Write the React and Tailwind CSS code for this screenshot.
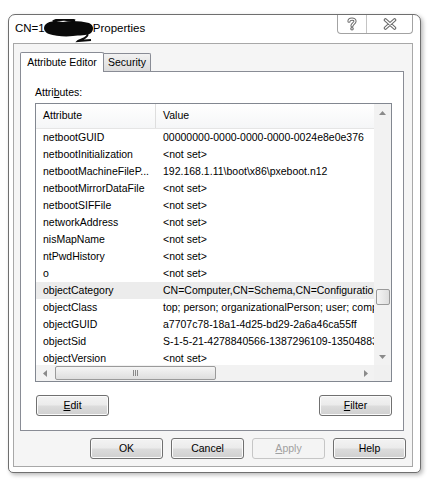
import React from "react";

const rows = [
  ["netbootGUID", "00000000-0000-0000-0000-0024e8e0e376"],
  ["netbootInitialization", "<not set>"],
  ["netbootMachineFileP...", "192.168.1.11\\boot\\x86\\pxeboot.n12"],
  ["netbootMirrorDataFile", "<not set>"],
  ["netbootSIFFile", "<not set>"],
  ["networkAddress", "<not set>"],
  ["nisMapName", "<not set>"],
  ["ntPwdHistory", "<not set>"],
  ["o", "<not set>"],
  ["objectCategory", "CN=Computer,CN=Schema,CN=Configuration,DC=corp,DC=local", true],
  ["objectClass", "top; person; organizationalPerson; user; computer"],
  ["objectGUID", "a7707c78-18a1-4d25-bd29-2a6a46ca55ff"],
  ["objectSid", "S-1-5-21-4278840566-1387296109-1350488331-1105"],
  ["objectVersion", "<not set>"],
];

function Btn({ children, disabled }) {
  return (
    <div
      className={`flex h-[21px] w-[73px] items-center justify-center rounded-[3px] border text-[10.5px] ${
        disabled
          ? "border-[#c6c6c6] bg-[#f4f4f4] text-[#a0a0a0]"
          : "border-[#707070] bg-[linear-gradient(#f3f3f3_0%,#ebebeb_48%,#dcdcdc_52%,#d0d0d0_100%)] text-black shadow-[inset_0_0_0_1px_#fbfbfb]"
      }`}
    >
      {children}
    </div>
  );
}

function Arrow({ dir }) {
  const pts = {
    up: "0,4 3.5,0 7,4",
    down: "0,0 3.5,4 7,0",
    left: "4,0 0,3.5 4,7",
    right: "0,0 4,3.5 0,7",
  }[dir];
  const vert = dir === "up" || dir === "down";
  return (
    <svg width={vert ? 7 : 4} height={vert ? 4 : 7}>
      <polygon points={pts} fill="#8a8a8a" />
    </svg>
  );
}

function Redaction() {
  return (
    <svg width="52" height="24" viewBox="0 0 52 24" className="-mx-[2px] mt-[4px]">
      <path
        d="M2 6 C6 1 14 2 20 3 C28 1 38 2 46 4 C51 6 51 11 48 14 C44 17 36 16 30 17 C22 18 12 17 6 15 C1 13 0 9 2 6 Z"
        fill="#0a0a0a"
      />
      <path d="M10 3 C16 -1 26 0 32 2" stroke="#0a0a0a" strokeWidth="3" fill="none" />
      <path
        d="M36 14 C42 12 46 14 44 17 C42 20 36 21 35 22 L48 21"
        stroke="#0a0a0a"
        strokeWidth="2"
        fill="none"
      />
    </svg>
  );
}

export default function App() {
  return (
    <div className="h-[494px] w-[440px] bg-white pl-[8px] pt-[14px] font-['Liberation_Sans',Arial,sans-serif] text-black">
      {/* Window */}
      <div className="flex h-[459px] w-[413px] flex-col rounded-t-[7px] rounded-b-[5px] border border-[#6f6f6f] bg-white shadow-[2px_2px_4px_rgba(0,0,0,0.28)]">
        {/* Title bar */}
        <div className="flex h-[28px] items-start justify-between pl-[6px] pr-[7px]">
          <div className="flex h-[28px] items-center text-[11.5px] leading-none">
            <span>CN=1</span>
            <Redaction />
            <span>Properties</span>
          </div>
          <div className="flex h-[19px] rounded-b-[4px] border border-t-0 border-[#a3a3a3] bg-white">
            <div className="flex w-[29px] items-center justify-center border-r border-[#c4c4c4]">
              <svg width="10" height="14" viewBox="0 0 10 14">
                <path
                  d="M2 4.2 C2 1.5 8 1.2 8 4.2 C8 6.4 5 6.5 5 8.8"
                  stroke="#6b6b6b"
                  strokeWidth="3.2"
                  fill="none"
                  strokeLinecap="round"
                />
                <path
                  d="M2 4.2 C2 1.5 8 1.2 8 4.2 C8 6.4 5 6.5 5 8.8"
                  stroke="#fff"
                  strokeWidth="1.2"
                  fill="none"
                  strokeLinecap="round"
                />
                <circle cx="5" cy="11.8" r="1.8" fill="#6b6b6b" />
                <circle cx="5" cy="11.8" r="0.7" fill="#fff" />
              </svg>
            </div>
            <div className="flex w-[45px] items-center justify-center">
              <svg width="14" height="12" viewBox="0 0 14 12">
                <path d="M2.5 2 L11.5 10 M11.5 2 L2.5 10" stroke="#6b6b6b" strokeWidth="3.6" strokeLinecap="round" />
                <path d="M2.5 2 L11.5 10 M11.5 2 L2.5 10" stroke="#fff" strokeWidth="1.4" strokeLinecap="round" />
              </svg>
            </div>
          </div>
        </div>

        {/* Client area */}
        <div className="ml-[4px] flex h-[424px] w-[400px] flex-col border border-[#a8a8a8] bg-[#f5f5f5] pl-[6px] pr-[6px] pt-[8px]">
          {/* Tabs */}
          <div className="flex h-[19px] items-end text-[10.5px]">
            <div className="relative z-10 -mb-px flex h-[20px] w-[84px] items-center justify-center rounded-t-[2px] border border-b-0 border-[#898c95] bg-white">
              Attribute Editor
            </div>
            <div className="flex h-[18px] w-[47px] items-center justify-center rounded-tr-[2px] border border-b-0 border-l-0 border-[#898c95] bg-[linear-gradient(#f2f2f2,#dcdcdc)] pt-[1px]">
              Security
            </div>
          </div>

          {/* Tab page */}
          <div className="flex h-[360px] w-[384px] flex-col border border-[#898c95] bg-white pl-[14px] pr-[10px] pt-[13px] text-[10.5px]">
            <div className="h-[14px] leading-[14px]">
              Attri<span className="underline">b</span>utes:
            </div>

            {/* List */}
            <div className="mt-[4px] flex h-[279px] w-[357px] flex-col border border-[#828790]">
              <div className="flex h-[261px]">
                <div className="flex w-[338px] flex-col overflow-hidden">
                  <div className="flex h-[25px] shrink-0 items-center border-b border-[#e5e5e5] bg-[linear-gradient(#ffffff,#f5f6f7)]">
                    <div className="flex h-full w-[120px] items-center border-r border-[#dedede] pl-[7px]">Attribute</div>
                    <div className="pl-[7px]">Value</div>
                  </div>
                  {rows.map(([name, value, sel]) => (
                    <div
                      key={name}
                      className={`flex h-[17px] shrink-0 items-center whitespace-nowrap ${sel ? "bg-[#ececec]" : ""}`}
                    >
                      <div className="w-[120px] overflow-hidden pl-[7px]">{name}</div>
                      <div className="w-[218px] overflow-hidden pl-[7px]">{value}</div>
                    </div>
                  ))}
                </div>
                {/* Vertical scrollbar */}
                <div className="flex w-[17px] flex-col items-center bg-[#f2f2f2]">
                  <div className="flex h-[17px] items-center justify-center">
                    <Arrow dir="up" />
                  </div>
                  <div className="flex-1" />
                  <div className="h-[16px] w-[14px] rounded-[2px] border border-[#9a9a9a] bg-[linear-gradient(90deg,#f5f5f5,#dedede)]" />
                  <div className="h-[43px]" />
                  <div className="flex h-[17px] items-center justify-center">
                    <Arrow dir="down" />
                  </div>
                </div>
              </div>
              {/* Horizontal scrollbar */}
              <div className="flex h-[16px]">
                <div className="flex w-[338px] items-center bg-[#f2f2f2]">
                  <div className="flex w-[17px] items-center justify-center">
                    <Arrow dir="left" />
                  </div>
                  <div className="ml-[2px] flex h-[14px] w-[161px] items-center justify-center rounded-[2px] border border-[#9a9a9a] bg-[linear-gradient(#f5f5f5,#dedede)]">
                    <svg width="6" height="6">
                      <path d="M0.5 0 V6 M2.5 0 V6 M4.5 0 V6" stroke="#8a8a8a" strokeWidth="1" />
                    </svg>
                  </div>
                  <div className="flex-1" />
                  <div className="flex w-[17px] items-center justify-center">
                    <Arrow dir="right" />
                  </div>
                </div>
                <div className="w-[17px] bg-[#f0f0f0]" />
              </div>
            </div>

            {/* Edit / Filter */}
            <div className="ml-[1px] mt-[13px] flex w-[356px] justify-between">
              <Btn>
                <span>
                  <span className="underline">E</span>dit
                </span>
              </Btn>
              <Btn>
                <span>
                  <span className="underline">F</span>ilter
                </span>
              </Btn>
            </div>
          </div>

          {/* Dialog buttons */}
          <div className="mt-[7px] flex justify-end gap-[8px]">
            <Btn>OK</Btn>
            <Btn>Cancel</Btn>
            <Btn disabled>
              <span>
                <span className="underline">A</span>pply
              </span>
            </Btn>
            <Btn>Help</Btn>
          </div>
        </div>
      </div>
    </div>
  );
}
